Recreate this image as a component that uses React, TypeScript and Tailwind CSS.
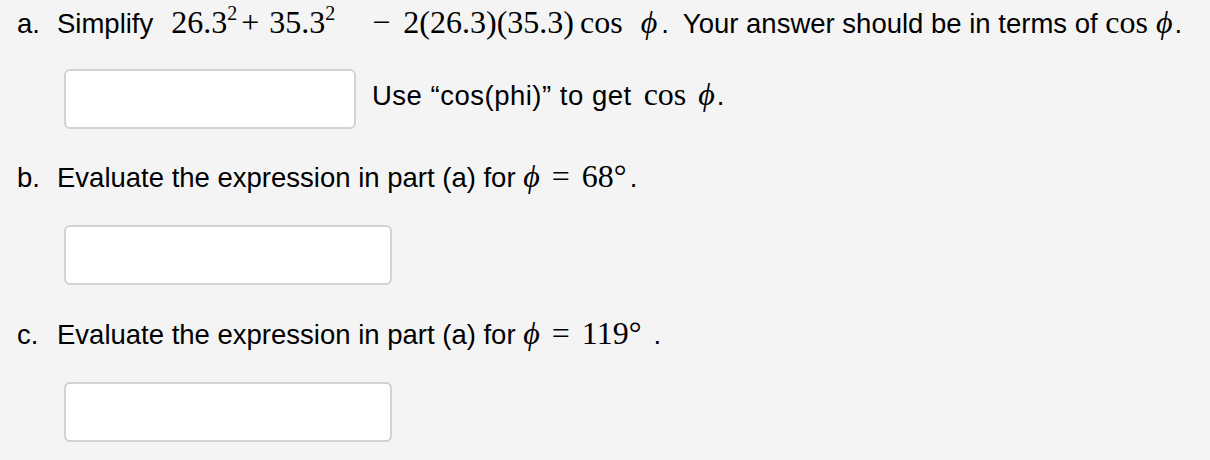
import React from 'react';

const serif = { fontFamily: '"Liberation Serif", "DejaVu Serif", serif' };

function Phi() {
  return (
    <span className="italic" style={serif}>
      ϕ
    </span>
  );
}

function Sq() {
  return <span className="relative -top-[13px] text-[20px] leading-none">2</span>;
}

function AnswerBox({ wide }: { wide?: boolean }) {
  return (
    <input
      type="text"
      className={`h-[60px] ${wide ? 'w-[328px]' : 'w-[292px]'} rounded-[6px] border-2 border-[#d2d2d2] bg-white px-2 text-[22px] outline-none`}
    />
  );
}

export default function App() {
  return (
    <div
      className="min-h-screen w-[1210px] h-[460px] overflow-hidden bg-[#f4f4f4] pl-[17px] text-[27.5px] text-black"
      style={{ fontFamily: '"Liberation Sans", Arial, sans-serif' }}
    >
      {/* part a */}
      <div className="h-[42px] pt-[2px] leading-[40px] whitespace-nowrap">
        <span className="inline-block w-[40px]">a.</span>
        <span>Simplify</span>
        <span className="ml-[18px] text-[32px]" style={serif}>
          26.3<Sq />
          <span className="ml-[4px] mr-[10px]">+</span>
          35.3<Sq />
          <span className="ml-[37px] mr-[13px]">−</span>
          2(26.3)(35.3)
          <span className="ml-[6px]">cos</span>
          <span className="ml-[18px]">
            <Phi />
          </span>
        </span>
        <span className="ml-[4px]">.</span>
        <span className="ml-[14px]">Your answer should be in terms of </span>
        <span className="text-[32px]" style={serif}>
          cos <Phi />
        </span>
        <span className="ml-[2px]">.</span>
      </div>
      <div className="mt-[27px] flex items-start pl-[47px]">
        <AnswerBox />
        <span className="ml-[16px] mt-[5px] leading-[40px] whitespace-nowrap">
          <span className="tracking-[0.5px]">Use “cos(phi)” to get</span>
          <span className="ml-[12px] text-[32px]" style={serif}>
            cos
          </span>
          <span className="ml-[12px] text-[32px]">
            <Phi />
          </span>
          <span className="ml-[2px]">.</span>
        </span>
      </div>

      {/* part b */}
      <div className="mt-[27px] h-[40px] leading-[40px] whitespace-nowrap">
        <span className="inline-block w-[40px]">b.</span>
        <span>Evaluate the expression in part (a) for </span>
        <span className="text-[32px]" style={serif}>
          <Phi />
          <span className="mx-[12px]">=</span>
          68°
        </span>
        <span className="ml-[3px]">.</span>
      </div>
      <div className="mt-[29px] pl-[47px]">
        <AnswerBox wide />
      </div>

      {/* part c */}
      <div className="mt-[28px] h-[40px] leading-[40px] whitespace-nowrap">
        <span className="inline-block w-[40px]">c.</span>
        <span>Evaluate the expression in part (a) for </span>
        <span className="text-[32px]" style={serif}>
          <Phi />
          <span className="mx-[12px]">=</span>
          119°
        </span>
        <span className="ml-[12px]">.</span>
      </div>
      <div className="mt-[29px] pl-[47px]">
        <AnswerBox wide />
      </div>
    </div>
  );
}
